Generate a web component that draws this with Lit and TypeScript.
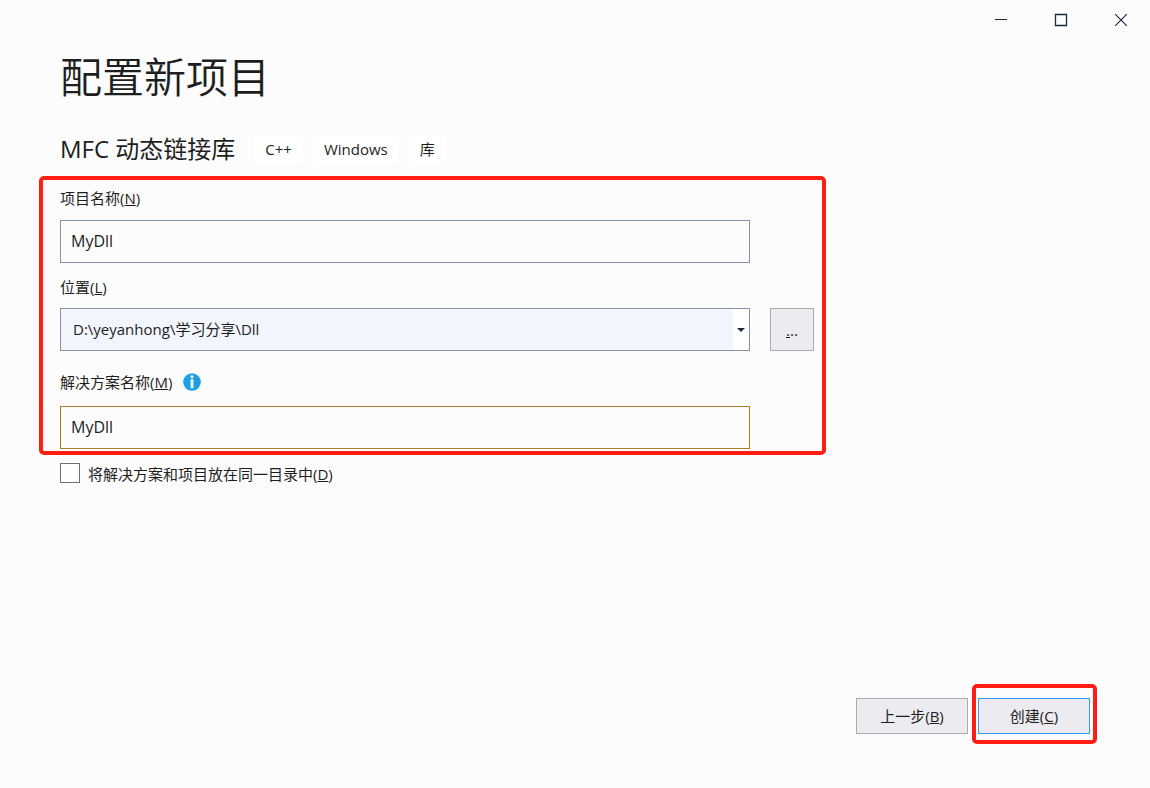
import { LitElement, html, css } from "lit";
import { customElement, state } from "lit/decorators.js";

@customElement("window-controls")
class WindowControls extends LitElement {
  static styles = css`
    :host {
      display: flex;
      justify-content: flex-end;
      gap: 2px;
    }
    button {
      display: grid;
      place-items: center;
      width: 58px;
      height: 40px;
      padding: 0;
      border: 0;
      background: none;
    }
    svg {
      display: block;
      fill: none;
      stroke: #1b293e;
    }
  `;

  render() {
    return html`
      <button type="button" aria-label="最小化">
        <svg width="14" height="14" viewBox="0 0 14 14"><path d="M1 6.5h12" /></svg>
      </button>
      <button type="button" aria-label="最大化">
        <svg width="14" height="14" viewBox="0 0 14 14"><path d="M1.5 1.5h11v11h-11z" stroke-width="1.3" /></svg>
      </button>
      <button type="button" aria-label="关闭">
        <svg width="14" height="14" viewBox="0 0 14 14"><path d="M1.2 1.2l11.6 11.6M12.8 1.2L1.2 12.8" stroke-width="1.2" /></svg>
      </button>
    `;
  }
}

@customElement("app-root")
class AppRoot extends LitElement {
  @state() projectName = "MyDll";
  @state() solutionName = "MyDll";

  private tags = ["C++", "Windows", "库"];

  static styles = css`
    :host {
      display: flex;
      flex-direction: column;
      box-sizing: border-box;
      min-height: 100vh;
      background: #fcfcfc;
      color: #1e1e1e;
      font: 15px/20px "Open Sans", "Noto Sans CJK SC", sans-serif;
    }
    *,
    *::before {
      box-sizing: border-box;
    }
    button,
    input,
    select {
      margin: 0;
      border-radius: 0;
      color: inherit;
      font: inherit;
    }
    header {
      padding: 5px 60px 0;
    }
    h1 {
      margin: 0;
      font-family: "Noto Sans CJK SC", sans-serif;
      font-size: 42px;
      font-weight: 350;
      line-height: 60px;
    }
    .template {
      display: flex;
      flex-wrap: wrap;
      align-items: center;
      gap: 10px;
      margin-top: 27px;
    }
    h2 {
      margin: 0 9px 0 0;
      font-size: 24px;
      font-weight: 400;
      line-height: 34px;
    }
    .tag {
      padding: 4px 11px;
      border-radius: 4px;
      background: #fff;
    }
    .highlight {
      border: 4px solid #ff1e12;
      border-radius: 5px;
    }
    .fields {
      display: grid;
      grid-template-columns: minmax(0, 1fr) 44px;
      column-gap: 20px;
      max-width: 787px;
      margin: 10px 39px 0;
      padding: 8px 8px 2px 17px;
    }
    .caption {
      display: flex;
      align-items: center;
      gap: 11px;
      grid-column: 1 / -1;
      margin-bottom: 12px;
    }
    .caption.location {
      margin: 14px 0 11px;
    }
    .caption.solution {
      margin: 21px 0 14px;
    }
    .text {
      grid-column: 1;
      width: 100%;
      height: 43px;
      padding: 0 10px 2px;
      border: 1px solid #8591a8;
      background: #fcfcfc;
      font-size: 16px;
      outline: none;
    }
    .text.warn {
      border-color: #a87c2c;
    }
    .combo {
      display: grid;
      grid-template-columns: minmax(0, 1fr) 16px;
      align-items: center;
      height: 43px;
      border: 1px solid #8591a8;
      background: #fff;
    }
    .combo select {
      grid-area: 1 / 1 / 2 / 3;
      width: 100%;
      height: 41px;
      padding: 0 12px 2px;
      border: 0;
      background: linear-gradient(#f2f5fe, #f2f5fe) 0 0 / calc(100% - 16px) 100% no-repeat;
      appearance: none;
      outline: none;
    }
    .combo svg {
      grid-area: 1 / 2;
      justify-self: center;
      pointer-events: none;
    }
    .push {
      padding: 0;
      border: 1px solid #acacac;
      background: #ececf0;
    }
    .info {
      display: block;
    }
    .same {
      display: flex;
      align-items: center;
      gap: 8px;
      margin: 7px 60px 0;
    }
    .same input {
      width: 20px;
      height: 20px;
      border: 1px solid #717171;
      background: #fefefe;
      appearance: none;
    }
    .same input:checked {
      box-shadow: inset 0 0 0 4px #fefefe;
      background: #1b293e;
    }
    .same label {
      padding-top: 2px;
    }
    footer {
      display: flex;
      justify-content: flex-end;
      align-items: baseline;
      gap: 4px;
      margin-top: auto;
      padding: 20px 53px 44px;
    }
    footer .push {
      display: block;
      width: 112px;
      height: 36px;
    }
    footer .highlight {
      padding: 10px 3px 6px 2px;
    }
    .push.primary {
      border-color: #3399ff;
    }
  `;

  render() {
    return html`
      <window-controls></window-controls>
      <header>
        <h1>配置新项目</h1>
        <div class="template">
          <h2>MFC 动态链接库</h2>
          ${this.tags.map((tag) => html`<span class="tag">${tag}</span>`)}
        </div>
      </header>

      <section class="fields highlight">
        <label class="caption" for="project"><span>项目名称(<u>N</u>)</span></label>
        <input
          id="project"
          class="text"
          type="text"
          .value=${this.projectName}
          @input=${(e: Event) => (this.projectName = (e.target as HTMLInputElement).value)}
        />

        <label class="caption location" for="location"><span>位置(<u>L</u>)</span></label>
        <div class="combo">
          <select id="location">
            <option>D:\\yeyanhong\\学习分享\\Dll</option>
          </select>
          <svg width="8" height="4" viewBox="0 0 8 4"><path d="M0 0h8L4 4z" fill="#1b293e" /></svg>
        </div>
        <button class="push" type="button" aria-label="浏览"><u>.</u>..</button>

        <div class="caption solution">
          <label for="solution">解决方案名称(<u>M</u>)</label>
          <svg class="info" width="18" height="18" viewBox="0 0 18 18">
            <circle cx="9" cy="9" r="8.8" fill="#1ba1e2" />
            <path d="M7.6 2.6h2.8v2.4H7.6zM7.6 6.2h2.8v9H7.6z" fill="#fff" />
          </svg>
        </div>
        <input
          id="solution"
          class="text warn"
          type="text"
          .value=${this.solutionName}
          @input=${(e: Event) => (this.solutionName = (e.target as HTMLInputElement).value)}
        />
      </section>

      <div class="same">
        <input id="same" type="checkbox" />
        <label for="same">将解决方案和项目放在同一目录中(<u>D</u>)</label>
      </div>

      <footer>
        <button class="push" type="button">上一步(<u>B</u>)</button>
        <div class="highlight">
          <button class="push primary" type="button">创建(<u>C</u>)</button>
        </div>
      </footer>
    `;
  }
}
